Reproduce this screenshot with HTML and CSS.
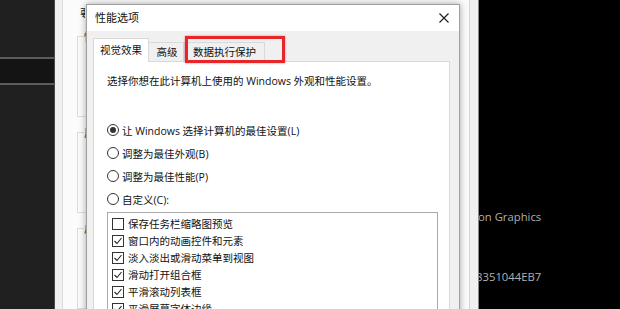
FILE: index.html
```html
<!DOCTYPE html>
<html lang="zh-CN">
<head>
<meta charset="utf-8">
<title>性能选项</title>
<link rel="stylesheet" href="styles.css">
</head>
<body>
<div class="screen">
  <div class="dark">
    <div class="band"></div>
  </div>

  <div class="bgwin">
    <div class="bgpanel">
      <div class="bgtitle"><span>要</span></div>
      <div class="group g1"><span class="glabel"><span>性</span></span></div>
      <div class="group g2"><span class="glabel"><span>用</span></span></div>
      <div class="group g3"><span class="glabel"><span>启</span></span></div>
    </div>

    <div class="dialog">
      <div class="titlebar">
        <span class="title">性能选项</span>
        <span class="close">
          <svg width="10" height="10" viewBox="0 0 10 10"><path d="M0.5 0.5 L9.5 9.5 M9.5 0.5 L0.5 9.5" stroke="#1a1a1a" stroke-width="1.1" fill="none"/></svg>
        </span>
      </div>
      <div class="dbody">
        <div class="tabs">
          <div class="tab active t1">视觉效果</div>
          <div class="tab t2">高级</div>
          <div class="tab t3">数据执行保护</div>
        </div>
        <div class="panel">
          <div class="desc">选择你想在此计算机上使用的 Windows 外观和性能设置。</div>
          <div class="radios">
            <div class="row"><span class="radio on"></span><span>让 Windows 选择计算机的最佳设置(L)</span></div>
            <div class="row"><span class="radio"></span><span>调整为最佳外观(B)</span></div>
            <div class="row"><span class="radio"></span><span>调整为最佳性能(P)</span></div>
            <div class="row"><span class="radio"></span><span>自定义(C):</span></div>
          </div>
          <div class="listbox">
            <div class="item"><span class="check"></span><span>保存任务栏缩略图预览</span></div>
            <div class="item"><span class="check on"><svg width="10" height="10" viewBox="0 0 10 10"><path d="M1.5 5 L4 7.5 L8.5 2" stroke="#222" stroke-width="1.1" fill="none"/></svg></span><span>窗口内的动画控件和元素</span></div>
            <div class="item"><span class="check on"><svg width="10" height="10" viewBox="0 0 10 10"><path d="M1.5 5 L4 7.5 L8.5 2" stroke="#222" stroke-width="1.1" fill="none"/></svg></span><span>淡入淡出或滑动菜单到视图</span></div>
            <div class="item"><span class="check on"><svg width="10" height="10" viewBox="0 0 10 10"><path d="M1.5 5 L4 7.5 L8.5 2" stroke="#222" stroke-width="1.1" fill="none"/></svg></span><span>滑动打开组合框</span></div>
            <div class="item"><span class="check on"><svg width="10" height="10" viewBox="0 0 10 10"><path d="M1.5 5 L4 7.5 L8.5 2" stroke="#222" stroke-width="1.1" fill="none"/></svg></span><span>平滑滚动列表框</span></div>
            <div class="item"><span class="check on"><svg width="10" height="10" viewBox="0 0 10 10"><path d="M1.5 5 L4 7.5 L8.5 2" stroke="#222" stroke-width="1.1" fill="none"/></svg></span><span>平滑屏幕字体边缘</span></div>
          </div>
        </div>
      </div>
      <div class="highlight"></div>
    </div>
  </div>

  <div class="black">
    <div class="gpu">on Graphics</div>
    <div class="devid">8351044EB7</div>
  </div>
</div>
</body>
</html>
```

FILE: styles.css
```css
* { box-sizing: border-box; }
html, body { margin: 0; padding: 0; }
body {
  width: 620px;
  height: 309px;
  overflow: hidden;
  font-family: "Open Sans", "Noto Sans CJK SC", sans-serif;
  font-size: 10.5px;
  color: #111;
}
.screen {
  display: flex;
  width: 620px;
  height: 309px;
  overflow: hidden;
}

/* left dark panel */
.dark {
  width: 55px;
  flex: none;
  background: #202020;
  border-right: 1px solid #4a4a4a;
}
.band {
  margin-top: 57px;
  height: 28px;
  background: #141414;
  border-top: 2px solid #5c5c5c;
  border-bottom: 2px solid #5c5c5c;
}

/* background window */
.bgwin {
  width: 423px;
  flex: none;
  position: relative;
  background: #f0f0f0;
  padding: 0 8px 0 7px;
  display: flex;
}
.bgpanel {
  flex: 1;
  background: #fbfbfb;
  border-left: 1px solid #dcdcdc;
  border-right: 1px solid #d6d6d6;
  padding: 6px 0 0 14px;
  display: flex;
  flex-direction: column;
}
.bgtitle {
  width: 5px;
  height: 14px;
  overflow: hidden;
  margin-left: 3px;
  font-family: "Noto Sans CJK SC", sans-serif;
  font-size: 11px;
  line-height: 14px;
  color: #222;
  white-space: nowrap;
}
.group {
  height: 92px;
  border: 1px solid #dcdcdc;
  margin-right: 10px;
  position: relative;
}
.g1 { margin-top: 18px; }
.g2, .g3 { margin-top: 15px; }
.glabel {
  position: absolute;
  top: -7px;
  left: 6px;
  width: 3px;
  height: 13px;
  overflow: hidden;
  font-family: "Noto Sans CJK SC", sans-serif;
  font-size: 11px;
  line-height: 13px;
  background: #fbfbfb;
  color: #3a2a10;
  white-space: nowrap;
}

/* dialog */
.dialog {
  position: absolute;
  left: 31px;
  top: 4px;
  width: 374px;
  height: 330px;
  border: 1px solid #a0a0a0;
  background: #f0f0f0;
  box-shadow: 0 0 7px rgba(0, 0, 0, 0.35);
}
.titlebar {
  height: 26px;
  background: #fff;
  display: flex;
  align-items: center;
  justify-content: space-between;
}
.title {
  padding-left: 8px;
  font-size: 11px;
  line-height: 14px;
  color: #111;
}
.close {
  width: 30px;
  height: 26px;
  display: flex;
  align-items: center;
  justify-content: center;
}
.dbody {
  padding: 7px 9px 0 6px;
}
.tabs {
  display: flex;
  align-items: flex-end;
  height: 23px;
  position: relative;
  z-index: 2;
}
.tab {
  height: 19px;
  border: 1px solid #d9d9d9;
  border-bottom: none;
  background: #f0f0f0;
  display: flex;
  align-items: center;
  justify-content: center;
  line-height: 14px;
  color: #111;
}
.tab.active {
  height: 24px;
  margin-bottom: -1px;
  background: #fff;
  padding-bottom: 1px;
}
.t1 { width: 56px; }
.t2 { width: 35px; border-left: none; padding-left: 2px; }
.t3 { width: 81px; }
.panel {
  background: #fff;
  border: 1px solid #d9d9d9;
  height: 260px;
  padding: 11px 0 0 13px;
}
.desc {
  line-height: 16px;
  white-space: nowrap;
}
.radios {
  margin-top: 33px;
  display: flex;
  flex-direction: column;
  gap: 7px;
}
.row {
  display: flex;
  align-items: center;
  height: 16px;
  white-space: nowrap;
}
.radio {
  width: 12px;
  height: 12px;
  border: 1px solid #333;
  border-radius: 50%;
  margin-right: 3px;
  display: flex;
  align-items: center;
  justify-content: center;
  flex: none;
}
.radio.on::after {
  content: "";
  width: 6px;
  height: 6px;
  border-radius: 50%;
  background: #333;
}
.listbox {
  margin-top: 5px;
  width: 331px;
  height: 120px;
  border: 1px solid #a9a9ae;
  padding: 2px 0 0 4px;
}
.item {
  display: flex;
  align-items: center;
  height: 17px;
  white-space: nowrap;
}
.check {
  width: 12px;
  height: 12px;
  border: 1px solid #333;
  margin-right: 4px;
  flex: none;
  display: flex;
  align-items: center;
  justify-content: center;
}
.highlight {
  position: absolute;
  left: 98px;
  top: 31px;
  width: 100px;
  height: 27px;
  border: 3px solid #e8262a;
  box-shadow: 0 0 2px rgba(180, 0, 0, 0.45);
  z-index: 5;
}

/* right black area */
.black {
  flex: 1;
  background: #000;
  overflow: hidden;
  border-left: 1px solid #8a8a8a;
  color: #b0b0b0;
  font-family: "Open Sans", "Noto Sans", sans-serif;
  font-size: 11.3px;
}
.gpu {
  margin-top: 208px;
  margin-left: -1px;
  line-height: 18px;
  white-space: nowrap;
}
.devid {
  margin-top: 42px;
  margin-left: -1px;
  line-height: 18px;
  white-space: nowrap;
  text-indent: -2px;
}
```
